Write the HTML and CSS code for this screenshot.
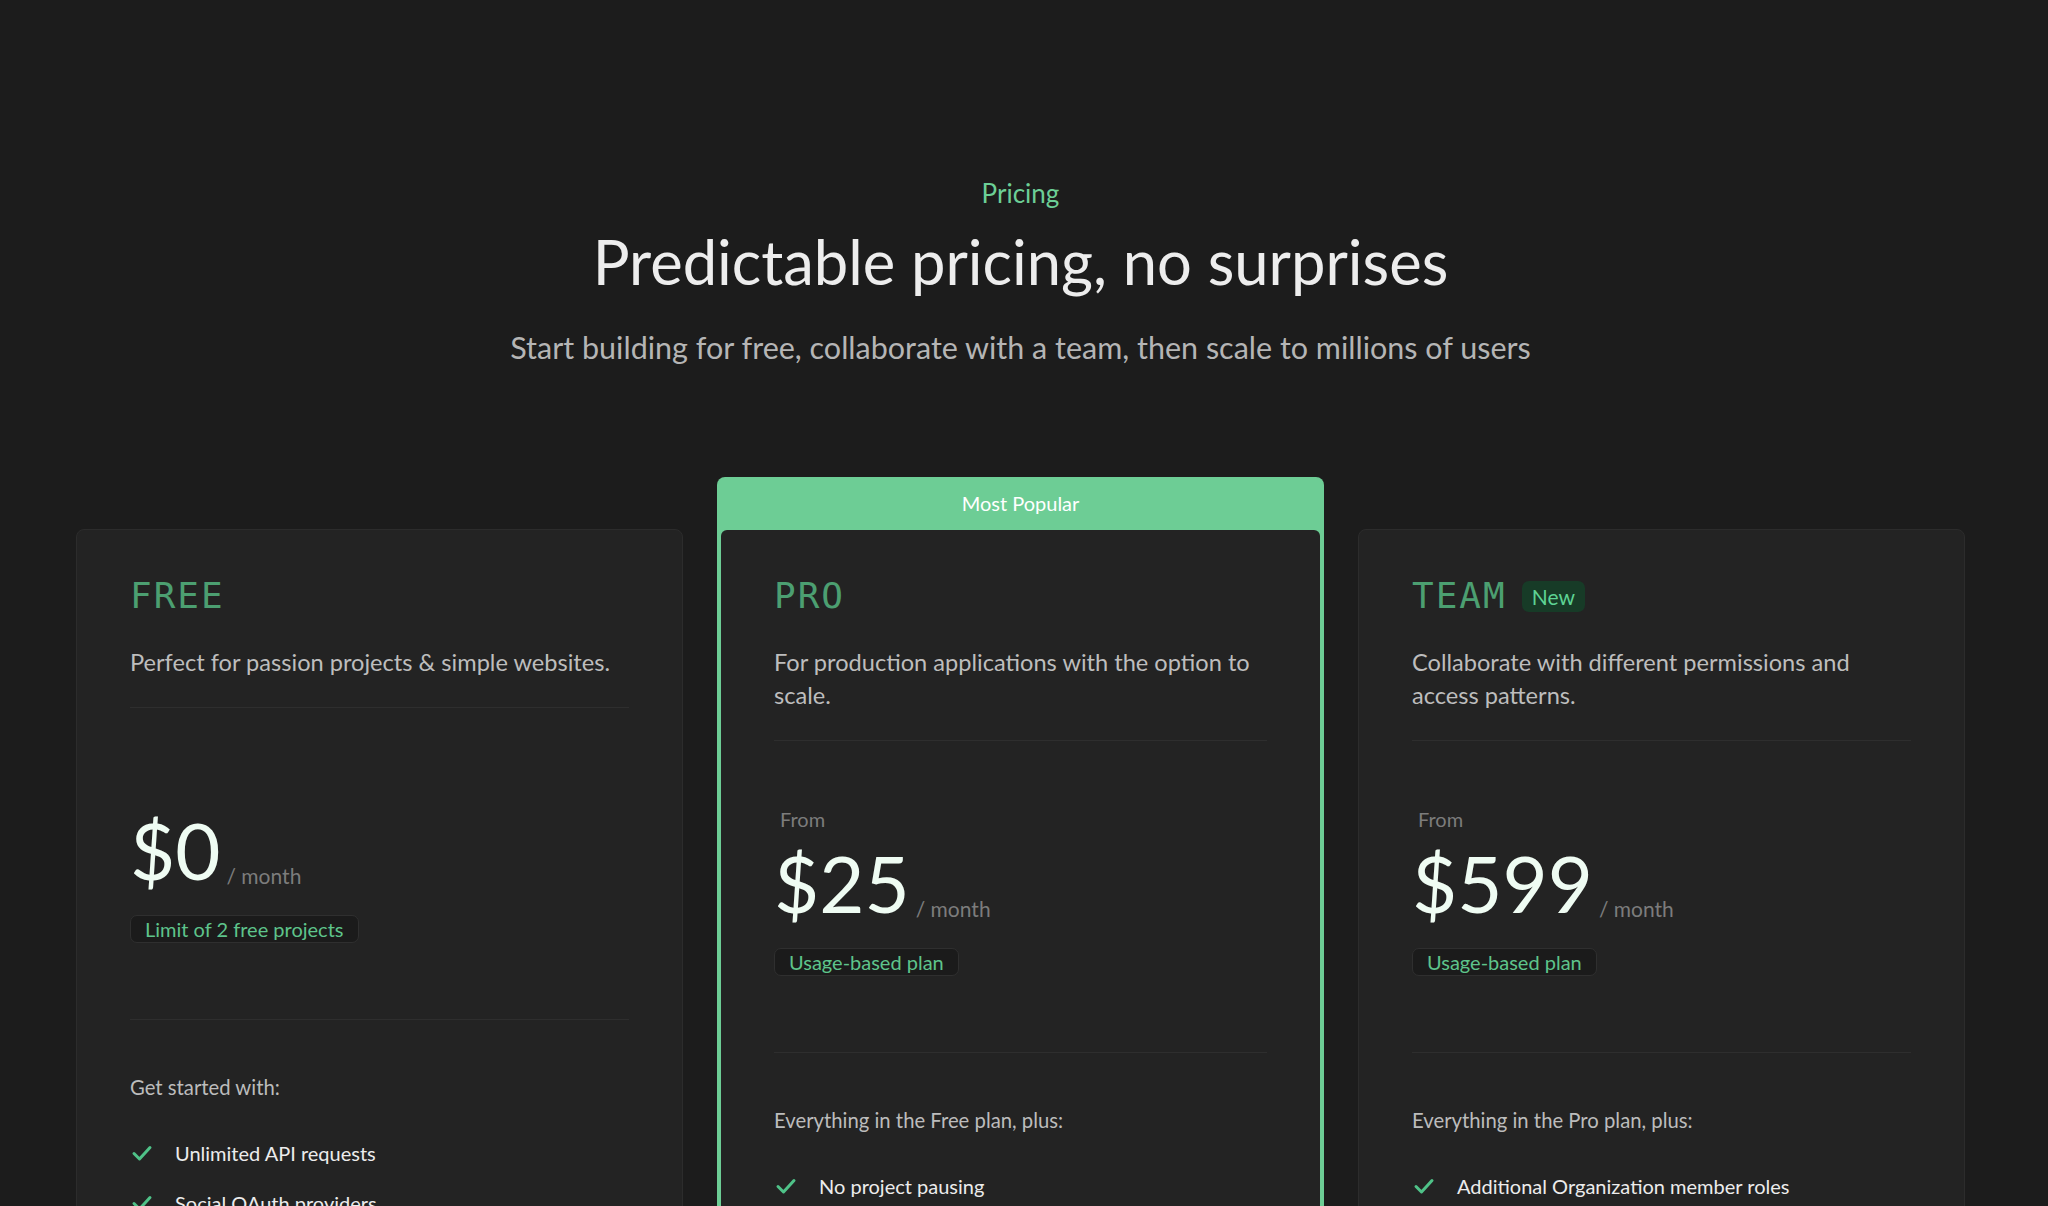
FILE: index.html
```html
<!DOCTYPE html>
<html lang="en">
<head>
<meta charset="utf-8">
<title>Pricing</title>
<link rel="stylesheet" href="styles.css">
</head>
<body>
<main class="page">
  <header class="intro">
    <p class="eyebrow">Pricing</p>
    <h1 class="headline">Predictable pricing, no surprises</h1>
    <p class="lede">Start building for free, collaborate with a team, then scale to millions of users</p>
  </header>

  <section class="plans">
    <article class="card card-plain">
      <div class="card-body">
        <div class="plan-head">
          <h2 class="plan-name">FREE</h2>
        </div>
        <p class="plan-desc">Perfect for passion projects &amp; simple websites.</p>
        <div class="price-block">
          <p class="from from-empty">&nbsp;</p>
          <div class="price-row"><span class="amount">$0</span><span class="per">/ month</span></div>
          <span class="pill">Limit of 2 free projects</span>
        </div>
        <div class="features">
          <p class="features-title">Get started with:</p>
          <ul class="feature-list">
            <li><svg class="check" viewBox="0 0 24 24"><polyline points="4 12.5 9.5 18 20 6.5"/></svg>Unlimited API requests</li>
            <li><svg class="check" viewBox="0 0 24 24"><polyline points="4 12.5 9.5 18 20 6.5"/></svg>Social OAuth providers</li>
            <li><svg class="check" viewBox="0 0 24 24"><polyline points="4 12.5 9.5 18 20 6.5"/></svg>500MB database space</li>
          </ul>
        </div>
      </div>
    </article>

    <article class="card card-featured">
      <div class="ribbon">Most Popular</div>
      <div class="card-body card-inner">
        <div class="plan-head">
          <h2 class="plan-name">PRO</h2>
        </div>
        <p class="plan-desc">For production applications with the option to scale.</p>
        <div class="price-block">
          <p class="from">From</p>
          <div class="price-row"><span class="amount">$25</span><span class="per">/ month</span></div>
          <span class="pill">Usage-based plan</span>
        </div>
        <div class="features">
          <p class="features-title">Everything in the Free plan, plus:</p>
          <ul class="feature-list">
            <li><svg class="check" viewBox="0 0 24 24"><polyline points="4 12.5 9.5 18 20 6.5"/></svg>No project pausing</li>
            <li><svg class="check" viewBox="0 0 24 24"><polyline points="4 12.5 9.5 18 20 6.5"/></svg>Daily backups stored for 7 days</li>
          </ul>
        </div>
      </div>
    </article>

    <article class="card card-plain">
      <div class="card-body">
        <div class="plan-head">
          <h2 class="plan-name">TEAM</h2>
          <span class="new-tag">New</span>
        </div>
        <p class="plan-desc">Collaborate with different permissions and access patterns.</p>
        <div class="price-block">
          <p class="from">From</p>
          <div class="price-row"><span class="amount">$599</span><span class="per">/ month</span></div>
          <span class="pill">Usage-based plan</span>
        </div>
        <div class="features">
          <p class="features-title">Everything in the Pro plan, plus:</p>
          <ul class="feature-list">
            <li><svg class="check" viewBox="0 0 24 24"><polyline points="4 12.5 9.5 18 20 6.5"/></svg>Additional Organization member roles</li>
            <li><svg class="check" viewBox="0 0 24 24"><polyline points="4 12.5 9.5 18 20 6.5"/></svg>SOC2</li>
          </ul>
        </div>
      </div>
    </article>
  </section>
</main>
</body>
</html>
```

FILE: styles.css
```css
* { box-sizing: border-box; }

html, body {
  margin: 0;
  padding: 0;
  background: #1c1c1c;
}

body {
  font-family: "Lato", "Noto Sans", sans-serif;
  color: #ededed;
}

.page {
  width: 2041px;
  padding: 179px 76px 0;
}

.intro {
  text-align: center;
}

.eyebrow {
  margin: 0;
  font-size: 26px;
  line-height: 28px;
  color: #6ccf96;
}

.headline {
  margin: 19px 0 0;
  font-size: 61.5px;
  line-height: 70px;
  font-weight: 400;
  color: #ededed;
}

.lede {
  margin: 33px 0 0;
  font-size: 30.5px;
  line-height: 36px;
  color: #b5b5b5;
}

.plans {
  margin-top: 112px;
  display: grid;
  grid-template-columns: repeat(3, 607px);
  column-gap: 34px;
  align-items: start;
}

.card {
  border-radius: 8px;
}

.card-plain {
  margin-top: 52px;
  background: #232323;
  border: 1px solid #2c2c2c;
}

.card-featured {
  background: #6dcd95;
  padding: 0 4px 4px;
}

.ribbon {
  height: 53px;
  display: flex;
  align-items: center;
  justify-content: center;
  padding-bottom: 2px;
  font-size: 20px;
  color: #ffffff;
}

.card-body {
  padding: 44px 53px 60px;
}

.card-inner {
  background: #232323;
  border-radius: 6px;
}

.plan-head {
  display: flex;
  align-items: center;
  gap: 15px;
  height: 44px;
}

.plan-name {
  margin: 0;
  font-family: "DejaVu Sans Mono", "Liberation Mono", monospace;
  font-weight: 400;
  font-size: 36px;
  line-height: 44px;
  letter-spacing: 2px;
  color: #4c9f71;
}

.new-tag {
  display: inline-flex;
  align-items: center;
  height: 31px;
  padding: 0 10px;
  border-radius: 7px;
  background: #173b27;
  color: #5ed394;
  font-size: 21px;
}

.plan-desc {
  margin: 28px 0 0;
  padding-bottom: 28px;
  border-bottom: 1px solid #2e2e2e;
  font-size: 23.6px;
  line-height: 33px;
  color: #bdbdbd;
}

.price-block {
  padding: 66px 0 76px;
  border-bottom: 1px solid #2e2e2e;
}

.from {
  margin: 0 0 12px 6px;
  font-size: 20px;
  line-height: 24px;
  color: #7c7c7c;
}

.from-empty {
  visibility: hidden;
}

.price-row {
  height: 80px;
  line-height: 80px;
  white-space: nowrap;
}

.amount {
  font-size: 78px;
  color: #effcf3;
}

.per {
  margin-left: 6px;
  vertical-align: -4px;
  font-size: 21px;
  color: #7c7c7c;
}

.pill {
  display: inline-flex;
  align-items: center;
  margin-top: 25px;
  height: 28px;
  padding: 0 14px;
  border: 1px solid #2f2f2f;
  border-radius: 7px;
  background: #1b1b1b;
  color: #5ec48b;
  font-size: 20px;
}

.features {
  padding-top: 55px;
}

.features-title {
  margin: 0;
  font-size: 20.3px;
  line-height: 24px;
  color: #bcbcbc;
}

.feature-list {
  list-style: none;
  margin: 42px 0 0;
  padding: 0;
  display: flex;
  flex-direction: column;
  gap: 26px;
}

.feature-list li {
  display: flex;
  align-items: center;
  gap: 21px;
  font-size: 20px;
  line-height: 24px;
  color: #ececec;
}

.check {
  width: 24px;
  height: 24px;
  flex: none;
  fill: none;
  stroke: #4fc288;
  stroke-width: 3;
  stroke-linecap: round;
  stroke-linejoin: round;
}
```
